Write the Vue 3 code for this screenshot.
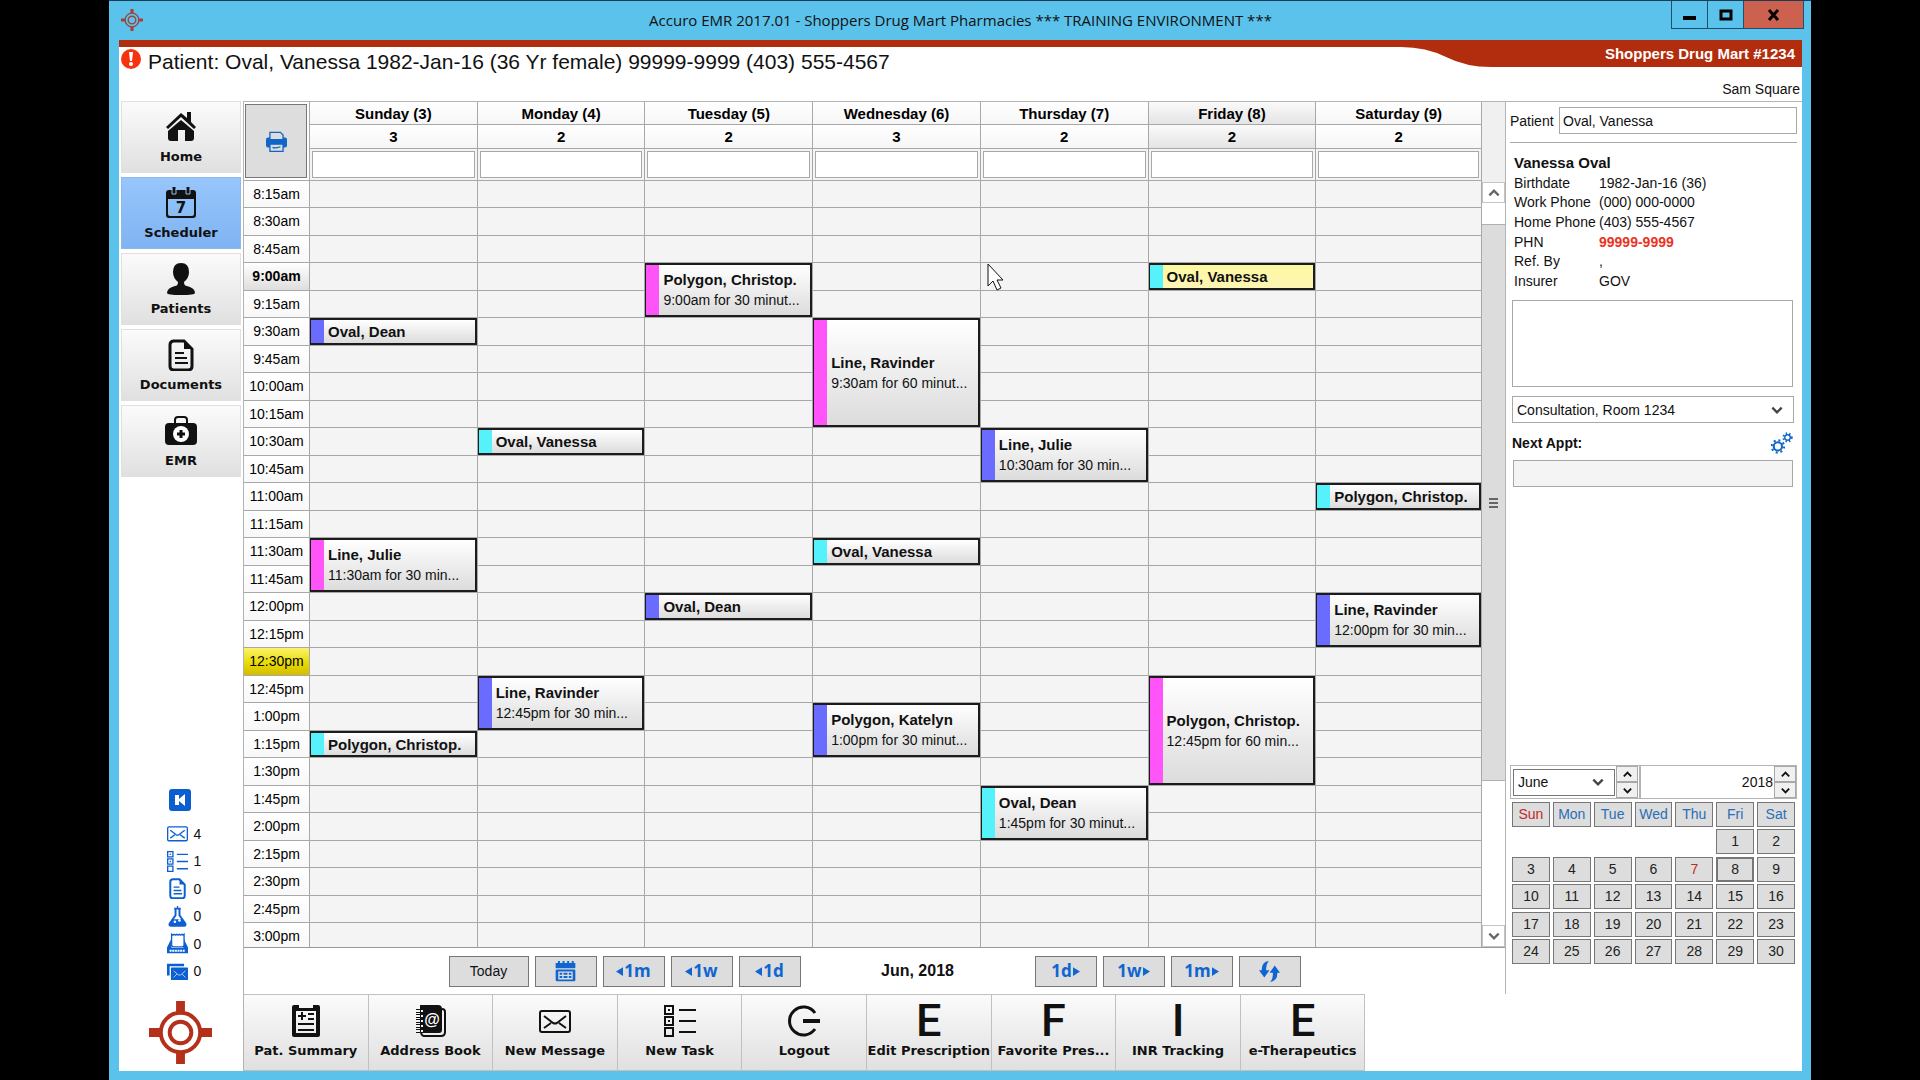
<script setup>
import { ref } from "vue";

const patient = ref("Oval, Vanessa");
const room = ref("Consultation, Room 1234");
const month = ref("June");
const note = ref("");
const nextAppt = ref("");

const menu = [
  { label: "Home", icon: "home" },
  { label: "Scheduler", icon: "calendar", active: true },
  { label: "Patients", icon: "person" },
  { label: "Documents", icon: "document" },
  { label: "EMR", icon: "emr" },
];

const counters = [
  { icon: "mail", label: "Messages", count: 4 },
  { icon: "tasks", label: "Tasks", count: 1 },
  { icon: "document", label: "Documents", count: 0 },
  { icon: "flask", label: "Labs", count: 0 },
  { icon: "tray", label: "Faxes", count: 0 },
  { icon: "mails", label: "Mailings", count: 0 },
];

const days = [
  { name: "Sunday (3)", count: 3 },
  { name: "Monday (4)", count: 2 },
  { name: "Tuesday (5)", count: 2 },
  { name: "Wednesday (6)", count: 3 },
  { name: "Thursday (7)", count: 2 },
  { name: "Friday (8)", count: 2, today: true },
  { name: "Saturday (9)", count: 2 },
];

// One slot every 15 minutes, from 8:15am to 3:00pm
const slots = Array.from({ length: 28 }, (_, i) => {
  const min = 8 * 60 + 15 + i * 15;
  const h = Math.floor(min / 60);
  return `${h > 12 ? h - 12 : h}:${String(min % 60).padStart(2, "0")}${h < 12 ? "am" : "pm"}`;
});

const appts = [
  { day: 0, at: "9:30am", span: 1, color: "blue", name: "Oval, Dean" },
  { day: 0, at: "11:30am", span: 2, color: "pink", name: "Line, Julie", info: "11:30am for 30 min..." },
  { day: 0, at: "1:15pm", span: 1, color: "cyan", name: "Polygon, Christop." },
  { day: 1, at: "10:30am", span: 1, color: "cyan", name: "Oval, Vanessa" },
  { day: 1, at: "12:45pm", span: 2, color: "blue", name: "Line, Ravinder", info: "12:45pm for 30 min..." },
  { day: 2, at: "9:00am", span: 2, color: "pink", name: "Polygon, Christop.", info: "9:00am for 30 minut..." },
  { day: 2, at: "12:00pm", span: 1, color: "blue", name: "Oval, Dean" },
  { day: 3, at: "9:30am", span: 4, color: "pink", name: "Line, Ravinder", info: "9:30am for 60 minut..." },
  { day: 3, at: "11:30am", span: 1, color: "cyan", name: "Oval, Vanessa" },
  { day: 3, at: "1:00pm", span: 2, color: "blue", name: "Polygon, Katelyn", info: "1:00pm for 30 minut..." },
  { day: 4, at: "10:30am", span: 2, color: "blue", name: "Line, Julie", info: "10:30am for 30 min..." },
  { day: 4, at: "1:45pm", span: 2, color: "cyan", name: "Oval, Dean", info: "1:45pm for 30 minut..." },
  { day: 5, at: "9:00am", span: 1, color: "cyan", name: "Oval, Vanessa", selected: true },
  { day: 5, at: "12:45pm", span: 4, color: "pink", name: "Polygon, Christop.", info: "12:45pm for 60 min..." },
  { day: 6, at: "11:00am", span: 1, color: "cyan", name: "Polygon, Christop." },
  { day: 6, at: "12:00pm", span: 2, color: "blue", name: "Line, Ravinder", info: "12:00pm for 30 min..." },
];

function place(a) {
  return {
    gridColumn: a.day + 2,
    gridRow: `${slots.indexOf(a.at) + 1} / span ${a.span}`,
  };
}

const details = [
  ["Birthdate", "1982-Jan-16 (36)"],
  ["Work Phone", "(000) 000-0000"],
  ["Home Phone", "(403) 555-4567"],
  ["PHN", "99999-9999"],
  ["Ref. By", ","],
  ["Insurer", "GOV"],
];

const weekdays = ["Sun", "Mon", "Tue", "Wed", "Thu", "Fri", "Sat"];

const tools = [
  { label: "Pat. Summary", icon: "summary" },
  { label: "Address Book", icon: "book" },
  { label: "New Message", icon: "mail" },
  { label: "New Task", icon: "tasks" },
  { label: "Logout", icon: "logout" },
  { label: "Edit Prescription", letter: "E" },
  { label: "Favorite Pres...", letter: "F" },
  { label: "INR Tracking", letter: "I" },
  { label: "e-Therapeutics", letter: "E" },
];
</script>

<template>
  <!-- Shared icon shapes -->
  <svg class="defs" aria-hidden="true">
    <symbol id="logo" viewBox="0 0 64 64">
      <g fill="none" stroke="currentColor">
        <circle cx="32" cy="32" r="20" stroke-width="4" />
        <circle cx="32" cy="32" r="11" stroke-width="4" />
        <path d="M32 0v13M32 51v13M0 32h13M51 32h13" stroke-width="9" />
      </g>
    </symbol>
    <symbol id="home" viewBox="0 0 32 32">
      <path d="M1 16 16 2l6 5V1h4v10l5 5-2 2L16 6 3 18z" fill="currentColor" />
      <path d="M3 20 16 9l13 11v7q0 3-3 3h-6V19h-7v11H6q-3 0-3-3z" fill="currentColor" />
    </symbol>
    <symbol id="calendar" viewBox="0 0 32 32">
      <path d="M4 3h24q3 0 3 3v22q0 3-3 3H4q-3 0-3-3V6q0-3 3-3zM3 12v15q0 2 2 2h22q2 0 2-2V12z" fill="currentColor" fill-rule="evenodd" />
      <path d="M9 0v7M23 0v7" stroke="currentColor" stroke-width="3" />
      <path d="M7 2v5h4V2M21 2v5h4V2" stroke="#94bbe8" fill="none" />
      <text x="16" y="26" text-anchor="middle" font-family="DejaVu Sans, sans-serif" font-weight="700" font-size="15" fill="currentColor">7</text>
    </symbol>
    <symbol id="person" viewBox="0 0 32 32">
      <path d="M16 0q8 0 8 9 0 6-5 10 0 4 3 4 8 2 8 7 0 2-14 2T2 30q0-5 8-7 3 0 3-4-5-4-5-10 0-9 8-9z" fill="currentColor" />
    </symbol>
    <symbol id="document" viewBox="0 0 32 32">
      <path d="M8 2h11l8 8v17q0 4-4 4H9q-4 0-4-4V6q0-4 4-4z" fill="none" stroke="currentColor" stroke-width="3" />
      <path d="M19 1l9 9h-9z" fill="currentColor" />
      <path d="M10 14h9M10 19h12M10 24h13" stroke="currentColor" stroke-width="2" />
    </symbol>
    <symbol id="emr" viewBox="0 0 32 32">
      <path d="M10 9V5q0-3 3-3h6q3 0 3 3v4" fill="none" stroke="currentColor" stroke-width="2" />
      <path d="M4 8h24q4 0 4 4v14q0 4-4 4H4q-4 0-4-4V12q0-4 4-4z" fill="currentColor" />
      <circle cx="16" cy="19" r="8" fill="#fff" />
      <path d="M16 15v8M12 19h8" stroke="currentColor" stroke-width="3" />
    </symbol>
    <symbol id="mail" viewBox="0 0 32 32">
      <rect x="1" y="6" width="30" height="21" rx="2" fill="none" stroke="currentColor" stroke-width="2" />
      <path d="M5 11l9 7q2 1 4 0l9-7M5 23l7-5M27 23l-7-5" fill="none" stroke="currentColor" stroke-width="2" />
    </symbol>
    <symbol id="tasks" viewBox="0 0 32 32">
      <g fill="none" stroke="currentColor" stroke-width="2">
        <path d="M1 1h8v8H1zM1 12h8v8H1zM1 23h8v8H1z" />
        <path d="M15 5h17M15 16h17M15 27h17" />
      </g>
      <path d="M4 4h2v2H4zM4 15h2v2H4z" fill="currentColor" />
    </symbol>
    <symbol id="flask" viewBox="0 0 32 32">
      <path d="M11 4h10M13 5v9L4 27q-1 3 2 3h20q3 0 2-3l-9-13V5" fill="none" stroke="currentColor" stroke-width="3" />
      <path d="M9 20h14l5 9H4z" fill="currentColor" />
      <path d="M16 0v3" stroke="currentColor" stroke-width="2" />
      <circle cx="12" cy="24" r="2" fill="#fff" />
      <circle cx="19" cy="22" r="2" fill="#fff" />
    </symbol>
    <symbol id="tray" viewBox="0 0 32 32">
      <path d="M6 10v9q0 4 4 4h12q4 0 4-4v-9l6 12v9H0v-9z" fill="currentColor" />
      <path d="M7 2q2 2 4 0 2 2 4 0 2 2 4 0 2 2 4 0 1 2 3 0v16q0 3-3 3H10q-3 0-3-3z" fill="#fff" stroke="currentColor" stroke-width="2" />
      <path d="M4 27h24" stroke="#fff" stroke-width="3" stroke-dasharray="3 1" />
    </symbol>
    <symbol id="mails" viewBox="0 0 32 32">
      <path d="M0 4h26v4H4v14H0z" fill="currentColor" />
      <rect x="6" y="10" width="26" height="19" rx="1" fill="currentColor" />
      <path d="M10 15l7 6q2 1 4 0l7-6M10 25l5-5M28 25l-5-5" fill="none" stroke="#fff" stroke-width="1" />
    </symbol>
    <symbol id="summary" viewBox="0 0 32 32">
      <path d="M4 0h5v3h14V0h5q2 0 2 2v28q0 2-2 2H4q-2 0-2-2V2q0-2 2-2zM6 6v22h20V6z" fill="currentColor" fill-rule="evenodd" />
      <path d="M12 7v8M8 11h8M18 9h6M18 14h6M8 19h16M8 25h16" stroke="currentColor" stroke-width="2" />
    </symbol>
    <symbol id="book" viewBox="0 0 32 32">
      <path d="M6 0h18q4 0 4 4v21q0 3-3 3H6z" fill="currentColor" />
      <path d="M28 4q3 0 3 3v20q0 4-4 4H10q-2 0-3-3" fill="none" stroke="currentColor" stroke-width="2" />
      <path d="M2 6h6M2 11h6M2 16h6M2 21h6M2 26h6" stroke="currentColor" stroke-width="4" />
      <path d="M1 6h8M1 11h8M1 16h8M1 21h8M1 26h8" stroke="#f4f4f4" stroke-width="2" stroke-dasharray="5 1" />
      <text x="18" y="20" text-anchor="middle" font-family="Liberation Sans, sans-serif" font-size="16" font-weight="700" fill="#fff">@</text>
    </symbol>
    <symbol id="logout" viewBox="0 0 32 32">
      <path d="M27 8A14 14 0 1 0 27 24" fill="none" stroke="currentColor" stroke-width="3" />
      <path d="M15 16h17" stroke="currentColor" stroke-width="4" />
    </symbol>
    <symbol id="printer" viewBox="0 0 32 32">
      <path d="M3 10h26q3 0 3 3v9q0 3-3 3H3q-3 0-3-3v-9q0-3 3-3z" fill="currentColor" />
      <path d="M6 13V2h16l4 4v7z" fill="#ddd" stroke="currentColor" stroke-width="2" />
      <path d="M6 20h20v11H6z" fill="#ddd" stroke="currentColor" stroke-width="2" />
      <path d="M10 25q4 2 12-1" fill="none" stroke="currentColor" stroke-width="2" />
    </symbol>
    <symbol id="month" viewBox="0 0 32 32">
      <path d="M1 3h30v8H1z" fill="currentColor" />
      <rect x="1" y="13" width="30" height="18" rx="2" fill="currentColor" />
      <path d="M6 0v8M13 0v8M20 0v8M27 0v8" stroke="currentColor" stroke-width="3" />
      <path d="M6 17h20v10H6zM12 17v10M20 17v10M6 22h20" fill="none" stroke="#ddd" stroke-width="2" />
    </symbol>
    <symbol id="refresh" viewBox="0 0 32 32">
      <path d="M15 0Q4 1 4 14H0l8 11 8-11h-5Q10 5 15 0zM17 32q11-1 11-14h4L24 7l-8 11h5q1 9-4 14z" fill="currentColor" />
    </symbol>
    <symbol id="gears" viewBox="0 0 32 32">
      <g fill="none" stroke="currentColor">
        <circle cx="10" cy="21" r="6" stroke-width="3" />
        <circle cx="10" cy="21" r="9" stroke-width="3" stroke-dasharray="3 4" />
        <circle cx="24" cy="8" r="4" stroke-width="2" />
        <circle cx="24" cy="8" r="6" stroke-width="3" stroke-dasharray="2 3" />
      </g>
    </symbol>
    <symbol id="up" viewBox="0 0 12 12">
      <path d="M2 8l4-4 4 4" fill="none" stroke="currentColor" stroke-width="2" />
    </symbol>
    <symbol id="down" viewBox="0 0 12 12">
      <path d="M2 4l4 4 4-4" fill="none" stroke="currentColor" stroke-width="2" />
    </symbol>
    <symbol id="back" viewBox="0 0 8 10"><path d="M8 0v10L0 5z" fill="currentColor" /></symbol>
    <symbol id="forward" viewBox="0 0 8 10"><path d="M0 0v10l8-5z" fill="currentColor" /></symbol>
  </svg>

  <div class="window">
    <header class="titlebar">
      <svg class="app-icon"><use href="#logo" /></svg>
      <h1>Accuro EMR 2017.01 - Shoppers Drug Mart Pharmacies *** TRAINING ENVIRONMENT ***</h1>
      <div class="controls">
        <button aria-label="Minimize"><svg viewBox="0 0 14 14"><path d="M0 10h13" stroke="#000" stroke-width="4" /></svg></button>
        <button aria-label="Maximize"><svg viewBox="0 0 14 14"><path d="M2 3h10v8H2z" fill="none" stroke="#000" stroke-width="3" /></svg></button>
        <button class="close" aria-label="Close"><svg viewBox="0 0 14 14"><path d="M2 2l9 10M11 2L2 12" stroke="#000" stroke-width="3" /></svg></button>
      </div>
    </header>

    <div class="body">
      <div class="banner">
        <div class="patient-line">
          <svg class="alert" viewBox="0 0 20 20">
            <circle cx="10" cy="10" r="10" fill="#f5330f" />
            <path d="M8 3h4l-1 9H9z" fill="#fff" />
            <circle cx="10" cy="15" r="2" fill="#fff" />
          </svg>
          <span>Patient: Oval, Vanessa 1982-Jan-16 (36 Yr female) 99999-9999 (403) 555-4567</span>
        </div>
        <div class="store">
          <svg class="curve" viewBox="0 0 90 26" preserveAspectRatio="none"><path d="M0 0h90v26Q65 26 45 16T0 6z" fill="#b12d0e" /></svg>
          <strong>Shoppers Drug Mart #1234</strong>
        </div>
        <div class="user">Sam Square</div>
      </div>

      <aside class="sidebar">
        <nav class="menu">
          <button v-for="m in menu" :key="m.label" :class="{ active: m.active }">
            <svg><use :href="'#' + m.icon" /></svg>
            {{ m.label }}
          </button>
        </nav>
        <div class="status">
          <button class="collapse" aria-label="Collapse">
            <svg viewBox="0 0 22 22"><path d="M6 6h4v4l6-5v12l-6-5v4H6z" fill="#fff" /></svg>
          </button>
          <ul>
            <li v-for="c in counters" :key="c.label" :title="c.label">
              <svg><use :href="'#' + c.icon" /></svg>
              <span>{{ c.count }}</span>
            </li>
          </ul>
          <svg class="brand"><use href="#logo" /></svg>
        </div>
      </aside>

      <main class="scheduler">
        <div class="week">
          <div class="head">
            <div class="print-cell">
              <button aria-label="Print"><svg><use href="#printer" /></svg></button>
            </div>
            <div v-for="d in days" :key="d.name" class="day" :class="{ today: d.today }">
              <strong>{{ d.name }}</strong>
              <strong>{{ d.count }}</strong>
              <div class="day-note"><input type="text" :aria-label="'Note for ' + d.name" /></div>
            </div>
          </div>
          <div class="slots">
            <template v-for="(t, i) in slots" :key="t">
              <div class="time" :class="{ now: t === '12:30pm', picked: t === '9:00am' }" :style="{ gridRow: i + 1 }">{{ t }}</div>
              <div v-for="n in 7" :key="n" class="cell" :style="{ gridRow: i + 1, gridColumn: n + 1 }"></div>
            </template>
            <div v-for="a in appts" :key="a.day + a.at" class="appt" :class="[a.color, { selected: a.selected }]" :style="place(a)">
              <strong>{{ a.name }}</strong>
              <span v-if="a.info">{{ a.info }}</span>
            </div>
            <svg class="cursor" viewBox="0 0 16 28"><path d="M1 1v22l5-5 4 9 4-2-4-8h6z" fill="#fff" stroke="#111" stroke-width="1" /></svg>
          </div>
        </div>
        <div class="scroll">
          <div class="scroll-top"></div>
          <button aria-label="Scroll up"><svg><use href="#up" /></svg></button>
          <div class="thumb"><i></i><i></i><i></i></div>
          <button aria-label="Scroll down"><svg><use href="#down" /></svg></button>
        </div>
        <div class="pager">
          <button class="wide">Today</button>
          <button aria-label="Pick date"><svg class="glyph"><use href="#month" /></svg></button>
          <button v-for="s in ['1m', '1w', '1d']" :key="s" class="step"><svg><use href="#back" /></svg>{{ s }}</button>
          <strong>Jun, 2018</strong>
          <button v-for="s in ['1d', '1w', '1m']" :key="s" class="step">{{ s }}<svg><use href="#forward" /></svg></button>
          <button aria-label="Refresh"><svg class="glyph"><use href="#refresh" /></svg></button>
        </div>
      </main>

      <section class="panel">
        <div class="search">
          <label for="patient">Patient</label>
          <input id="patient" v-model="patient" type="text" />
        </div>
        <h2>Vanessa Oval</h2>
        <dl>
          <template v-for="[k, v] in details" :key="k">
            <dt>{{ k }}</dt>
            <dd :class="{ phn: k === 'PHN' }">{{ v }}</dd>
          </template>
        </dl>
        <textarea v-model="note" aria-label="Patient note"></textarea>
        <div class="select room">
          <select v-model="room" aria-label="Appointment room">
            <option>Consultation, Room 1234</option>
          </select>
          <svg><use href="#down" /></svg>
        </div>
        <div class="next">
          <label for="next">Next Appt:</label>
          <button aria-label="Settings"><svg><use href="#gears" /></svg></button>
        </div>
        <input id="next" v-model="nextAppt" class="next-field" type="text" readonly />

        <div class="picker">
          <div class="picker-head">
            <div class="select month">
              <select v-model="month" aria-label="Month">
                <option>June</option>
              </select>
              <svg><use href="#down" /></svg>
            </div>
            <div class="spin">
              <button aria-label="Next month"><svg><use href="#up" /></svg></button>
              <button aria-label="Previous month"><svg><use href="#down" /></svg></button>
            </div>
            <input class="year" type="text" value="2018" aria-label="Year" />
            <div class="spin">
              <button aria-label="Next year"><svg><use href="#up" /></svg></button>
              <button aria-label="Previous year"><svg><use href="#down" /></svg></button>
            </div>
          </div>
          <div class="dates">
            <span v-for="w in weekdays" :key="w" :class="{ red: w === 'Sun' }">{{ w }}</span>
            <button v-for="d in 30" :key="d" :class="{ first: d === 1, red: d === 7, chosen: d === 8 }">{{ d }}</button>
          </div>
        </div>
      </section>

      <nav class="tools">
        <button v-for="t in tools" :key="t.label">
          <svg v-if="t.icon"><use :href="'#' + t.icon" /></svg>
          <b v-else>{{ t.letter }}</b>
          {{ t.label }}
        </button>
      </nav>
    </div>
  </div>
</template>

<style>
body {
  background: #000;
}
</style>

<style scoped>
.defs {
  display: none;
}
.window {
  display: flex;
  flex-direction: column;
  box-sizing: border-box;
  min-height: 100vh;
  margin: 0 109px;
  padding: 0 9px 9px 10px;
  border-top: 1px solid #1c3c55;
  background: #5bc2eb;
  color: #111;
  font: 14px/20px "Liberation Sans", Arial, sans-serif;
}
.window * {
  box-sizing: border-box;
}
svg {
  display: block;
  flex: none;
}
button,
input,
select,
textarea {
  margin: 0;
  padding: 0;
  border: 1px solid #a8a8a8;
  border-radius: 0;
  color: inherit;
  font: inherit;
}
h1,
h2,
ul,
dl,
dd {
  margin: 0;
  padding: 0;
}

/* Title bar */
.titlebar {
  display: grid;
  grid-template-columns: 132px 1fr 132px;
  height: 39px;
}
.app-icon {
  width: 22px;
  height: 22px;
  margin: 8px 0 0 2px;
  color: #a0423c;
}
.titlebar h1 {
  padding-top: 8px;
  text-align: center;
  font: 400 15px/22px "Open Sans", "Segoe UI", sans-serif;
}
.controls {
  display: flex;
  justify-content: flex-end;
  height: 28px;
  margin-right: -2px;
}
.controls button {
  display: grid;
  place-items: center;
  width: 36px;
  border: 1px solid #1f4f6b;
  border-width: 0 0 1px 1px;
  background: transparent;
}
.controls .close {
  width: 61px;
  border-right-width: 1px;
  background: #cd614f;
}
.controls svg {
  width: 14px;
  height: 14px;
}

.body {
  flex: 1;
  display: grid;
  grid-template-columns: 124px minmax(0, 1fr) 297px;
  grid-template-rows: 61px 1fr 77px;
  background: #fff;
}

/* Banner */
.banner {
  grid-column: 1 / -1;
  display: grid;
  grid-template-columns: 1fr auto;
  grid-template-rows: 26px 1fr;
  border-top: 1px solid #b12d0e;
  background: linear-gradient(#b12d0e 6px, #fff 6px);
}
.patient-line {
  grid-row: 1 / 3;
  display: flex;
  gap: 7px;
  padding: 8px 0 0 2px;
  font-size: 21px;
  line-height: 26px;
}
.alert {
  width: 20px;
  height: 20px;
}
.store {
  display: flex;
  color: #fff;
  font-size: 15px;
  line-height: 26px;
}
.store strong {
  padding: 0 7px 0 114px;
  background: #b12d0e;
}
.curve {
  width: 90px;
  height: 26px;
}
.user {
  grid-column: 2;
  padding: 12px 2px 0 0;
  text-align: right;
}

/* Left sidebar */
.sidebar {
  grid-row: 2 / 4;
  display: flex;
  flex-direction: column;
  justify-content: space-between;
}
.menu {
  display: flex;
  flex-direction: column;
  gap: 4px;
  padding: 0 2px;
}
.menu button,
.tools button {
  display: flex;
  flex-direction: column;
  align-items: center;
  border: 1px solid #e0e0e0;
  background: linear-gradient(#fbfbfb, #e0e0e0);
  font: 700 13px/18px "DejaVu Sans", Verdana, sans-serif;
  white-space: nowrap;
}
.menu button {
  gap: 5px;
  height: 72px;
  padding-top: 9px;
}
.menu .active {
  border-color: #8cb8ea;
  background: linear-gradient(#97c6fb, #7fb3f2);
}
.menu svg,
.tools svg {
  width: 32px;
  height: 32px;
}
.status {
  display: flex;
  flex-direction: column;
  align-items: center;
  padding: 0 2px 7px 0;
}
.collapse {
  border: 0;
  border-radius: 3px;
  background: #0b5fd0;
}
.collapse svg {
  width: 22px;
  height: 22px;
}
.status ul {
  display: grid;
  grid-auto-rows: 27px 28px;
  margin: 9px 0 16px 8px;
  list-style: none;
}
.status li {
  display: flex;
  align-items: center;
  gap: 6px;
}
.status li svg {
  width: 21px;
  height: 21px;
  color: #0b5fd0;
}
.brand {
  width: 63px;
  height: 63px;
  color: #b5301a;
}

/* Week view */
.scheduler {
  display: grid;
  grid-template-columns: minmax(0, 1fr) 23px;
  grid-template-rows: minmax(0, 1fr) 46px;
  border: 1px solid #b4b4b4;
  border-width: 1px 0 0 1px;
}
.week {
  display: flex;
  flex-direction: column;
  min-height: 0;
  border-bottom: 1px solid #999;
}
.head,
.slots {
  display: grid;
  grid-template-columns: 66px repeat(6, minmax(0, 168fr)) minmax(0, 166fr);
}
.head {
  height: 79px;
}
.print-cell {
  display: flex;
  padding: 2px 2px 2px 1px;
  border: 1px solid #a8a8a8;
  border-width: 0 1px 1px 0;
}
.print-cell button {
  flex: 1;
  display: grid;
  place-items: center;
  border-color: #777;
  background: #ddd;
}
.print-cell svg {
  width: 21px;
  height: 21px;
  color: #0f66c8;
}
.day {
  display: grid;
  grid-template-columns: minmax(0, 1fr);
  grid-template-rows: 23px 24px 1fr;
  border: 1px solid #a8a8a8;
  border-width: 0 1px 1px 0;
  text-align: center;
  line-height: 23px;
}
.day strong {
  border-bottom: 1px solid #a8a8a8;
  background: linear-gradient(#fff, #f6f6f6);
  color: #000;
  font-size: 15px;
}
.day.today strong {
  background: linear-gradient(#fafafa, #e4e4e4);
}
.day-note {
  display: flex;
  padding: 2px;
  background: #f4f4f4;
}
.day-note input {
  flex: 1;
  min-width: 0;
  background: #fff;
}
.slots {
  position: relative;
  flex: 1 1 0px;
  grid-auto-rows: 27px 28px;
  min-height: 0;
  overflow: hidden;
}
.time,
.cell {
  border: 1px solid #a8a8a8;
  border-width: 0 1px 1px 0;
}
.time {
  grid-column: 1;
  background: linear-gradient(#fff, #f8f8f8);
  color: #000;
  text-align: center;
  line-height: 27px;
}
.cell {
  background: #f4f4f4;
}
.time.picked {
  background: linear-gradient(#fff, #dedede);
  font-weight: 700;
}
.time.now {
  background: linear-gradient(#fbf36a, #e6d800 60%, #d2bc00);
}
.appt {
  z-index: 1;
  display: grid;
  grid-template-columns: 13px minmax(0, 1fr);
  grid-template-rows: 1fr auto auto 1fr;
  column-gap: 4px;
  margin: 0 1px 1px 0;
  border: 2px solid #1c1c1c;
  border-left-width: 1px;
  background: linear-gradient(#fff, #dcdcdc);
  line-height: 21px;
  white-space: nowrap;
  overflow: hidden;
}
.appt::before {
  content: "";
  grid-column: 1;
  grid-row: 1 / -1;
}
.appt strong {
  grid-column: 2;
  grid-row: 2;
  font-size: 15px;
}
.appt span {
  grid-column: 2;
  grid-row: 3;
}
.blue::before {
  background: #6a6cff;
}
.pink::before {
  background: #ff55f8;
}
.cyan::before {
  background: #55f2fb;
}
.selected {
  background: linear-gradient(#fff8a0, #fdf5b4);
}
.cursor {
  position: absolute;
  left: 60%;
  top: 82px;
  z-index: 2;
  width: 16px;
  height: 28px;
}

/* Scroll bar */
.scroll {
  display: grid;
  grid-template-rows: 80px 21px 21px 557px 1fr 22px;
  background: #fff;
  border-bottom: 1px solid #999;
}
.scroll-top {
  background: #f0f0f0;
}
.scroll button {
  display: grid;
  place-items: center;
  border-color: #c4c4c4;
  background: #fff;
}
.scroll button:last-child {
  grid-row: 6;
}
.scroll svg {
  width: 14px;
  height: 14px;
  color: #666;
}
.thumb {
  grid-row: 4;
  display: grid;
  align-content: center;
  justify-items: center;
  gap: 2px;
  border: 1px solid #b0b0b0;
  border-width: 1px 0;
  background: #dcdcdc;
}
.thumb i {
  width: 9px;
  height: 2px;
  background: #666;
}

/* Date paging */
.pager {
  grid-column: 1 / -1;
  display: flex;
  align-items: center;
  justify-content: center;
  gap: 6px;
}
.pager button {
  display: flex;
  align-items: center;
  justify-content: center;
  width: 62px;
  height: 31px;
  border-color: #777;
  background: #ddd;
}
.pager .wide {
  width: 80px;
}
.pager strong {
  width: 222px;
  text-align: center;
  font-size: 16px;
}
.pager .step {
  gap: 1px;
  color: #0f66d0;
  font: 700 17px/20px "Noto Sans", sans-serif;
}
.step svg {
  width: 7px;
  height: 9px;
}
.glyph {
  width: 21px;
  height: 21px;
  color: #0f66d0;
}

/* Patient panel */
.panel {
  display: flex;
  flex-direction: column;
  padding: 5px 5px 27px 4px;
  border: 1px solid #b4b4b4;
  border-width: 1px 0 0 1px;
}
.search {
  display: flex;
  align-items: center;
  justify-content: space-between;
  padding-bottom: 8px;
  border-bottom: 1px solid #a8a8a8;
}
.search input {
  width: 238px;
  height: 27px;
  padding-left: 3px;
}
h2 {
  margin: 10px 4px 0;
  font-size: 15px;
  line-height: 20px;
}
dl {
  display: grid;
  grid-template-columns: 85px 1fr;
  grid-auto-rows: 19px 20px 20px;
  margin: 0 4px 9px;
}
.phn {
  color: #ea3323;
  font-weight: 700;
}
textarea {
  display: block;
  height: 87px;
  margin: 0 4px 9px 2px;
  background: #fff;
  resize: none;
}
.select {
  display: grid;
  grid-template-columns: 1fr 24px;
  align-items: center;
}
.select select {
  grid-area: 1 / 1 / 2 / 3;
  height: 27px;
  padding-left: 4px;
  appearance: none;
  background: #fff;
}
.select svg {
  grid-area: 1 / 2;
  width: 14px;
  height: 14px;
  color: #444;
  pointer-events: none;
}
.room {
  margin: 0 3px 9px 2px;
}
.next {
  display: flex;
  align-items: center;
  justify-content: space-between;
  margin: 0 4px 6px 2px;
  font-weight: 700;
}
.next button {
  border: 0;
  background: none;
}
.next svg {
  width: 22px;
  height: 22px;
  color: #0f66c8;
}
.next-field {
  height: 27px;
  margin: 0 4px 0 3px;
  background: #f4f4f4;
}
.picker {
  margin-top: auto;
}
.picker-head {
  display: grid;
  grid-template-columns: 104px 22px 1fr 22px;
  column-gap: 1px;
  height: 34px;
  margin-bottom: 3px;
  border: 1px solid #b4b4b4;
}
.month {
  padding-left: 2px;
}
.month select {
  border-color: #777;
}
.spin {
  display: grid;
}
.spin button {
  display: grid;
  place-items: center;
  background: #f0f0f0;
}
.spin svg {
  width: 11px;
  height: 11px;
}
.year {
  min-width: 0;
  border: 0;
  border-left: 2px solid #b4b4b4;
  text-align: right;
}
.dates {
  display: grid;
  grid-template-columns: repeat(7, 1fr);
  grid-auto-rows: 27px 28px;
  column-gap: 3px;
  padding: 0 2px;
}
.dates span,
.dates button {
  height: 25px;
  border: 1px solid #777;
  background: #ddd;
  color: #222;
  text-align: center;
  line-height: 23px;
}
.dates span {
  color: #2a6fb5;
}
.dates .first {
  grid-column: 6;
}
.dates .red {
  color: #c22a2a;
}
.dates .chosen {
  border-width: 2px;
  line-height: 21px;
}

/* Bottom toolbar */
.tools {
  grid-column: 2 / 4;
  display: grid;
  grid-template-columns: repeat(9, minmax(0, 1fr));
  width: 72%;
  border-left: 1px solid #b4b4b4;
}
.tools button {
  gap: 5px;
  padding-top: 10px;
  border: 1px solid #c0c0c0;
  border-left: 0;
}
.tools b {
  height: 32px;
  font: 500 45px/32px Roboto, sans-serif;
}
</style>
